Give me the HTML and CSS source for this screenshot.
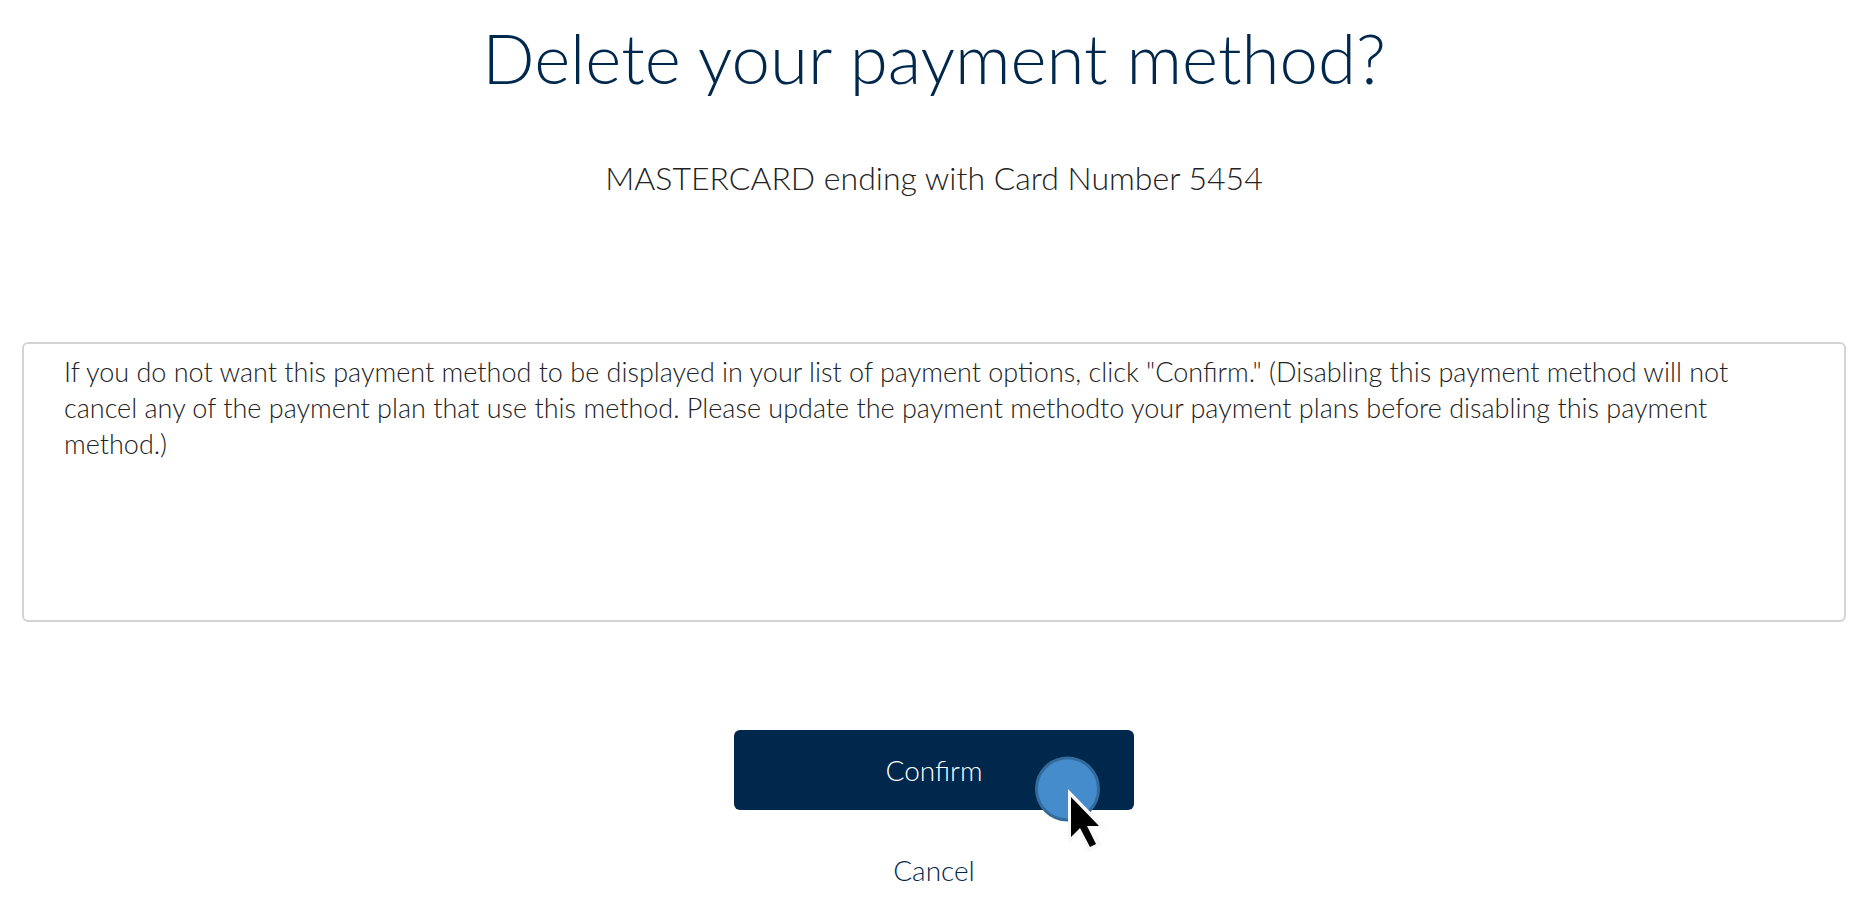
FILE: index.html
```
<!DOCTYPE html>
<html lang="en">
<head>
  <meta charset="UTF-8" />
  <meta name="viewport" content="width=device-width, initial-scale=1.0" />
  <title>Delete your payment method?</title>
  <link rel="stylesheet" href="styles.css">
</head>
<body>
  <main class="container">
    <h1>Delete your payment method?</h1>
    <p class="card-info">MASTERCARD ending with Card Number 5454</p>

    <div class="notice">
      If you do not want this payment method to be displayed in your list of payment options, click "Confirm." (Disabling this payment method will not cancel any of the payment plan that use this method. Please update the payment methodto your payment plans before disabling this payment method.)
    </div>

    <div class="actions">
      <div class="confirm-wrap">
        <button type="button" class="btn confirm-btn">Confirm</button>
        <svg class="pointer" width="72" height="96" viewBox="0 0 72 96" aria-hidden="true">
          <circle cx="33.5" cy="33" r="31" fill="#458ccc" stroke="#336c9c" stroke-width="3" />
          <path d="M34 33 V87 L45 78 L55 96 L68 89 L59 72 H72 Z" fill="#f7f7f7" />
          <path d="M37 41 V81 L46 72 L56 91 L62 88 L53 70 H65 Z" fill="#000" />
        </svg>
      </div>
      <a href="#" class="cancel-link">Cancel</a>
    </div>
  </main>
</body>
</html>
```
FILE: styles.css
```
body {
  margin: 0;
  background: #fff;
  color: #222;
  font-family: Lato, sans-serif;
  font-weight: 300;
}

.container {
  padding: 14px 18px 24px 22px;
}

h1 {
  margin: 0;
  color: #00274c;
  font-size: 69px;
  font-weight: 300;
  line-height: 88px;
  text-align: center;
}

.card-info {
  margin: 54px 0 0;
  font-size: 32px;
  line-height: 44px;
  text-align: center;
}

.notice {
  box-sizing: border-box;
  min-height: 280px;
  margin-top: 142px;
  padding: 10px 60px 10px 40px;
  border: 2px solid #d3d3d3;
  border-radius: 6px;
  font-size: 27px;
  line-height: 36px;
}

.actions {
  display: flex;
  flex-direction: column;
  align-items: center;
  gap: 40px;
  margin-top: 108px;
}

.confirm-wrap {
  position: relative;
}

.btn {
  width: 400px;
  height: 80px;
  padding: 0;
  border: none;
  border-radius: 6px;
  font-family: inherit;
  font-size: 28px;
  cursor: pointer;
}

.confirm-btn {
  display: block;
  background-color: #00274c;
  color: #fff;
  font-weight: 300;
}

/* mouse pointer with its click highlight, over the button */
.pointer {
  position: absolute;
  top: 26px;
  right: 28px;
  pointer-events: none;
}

.cancel-link {
  color: #00274c;
  font-size: 28px;
  line-height: 40px;
  text-decoration: none;
}
```
